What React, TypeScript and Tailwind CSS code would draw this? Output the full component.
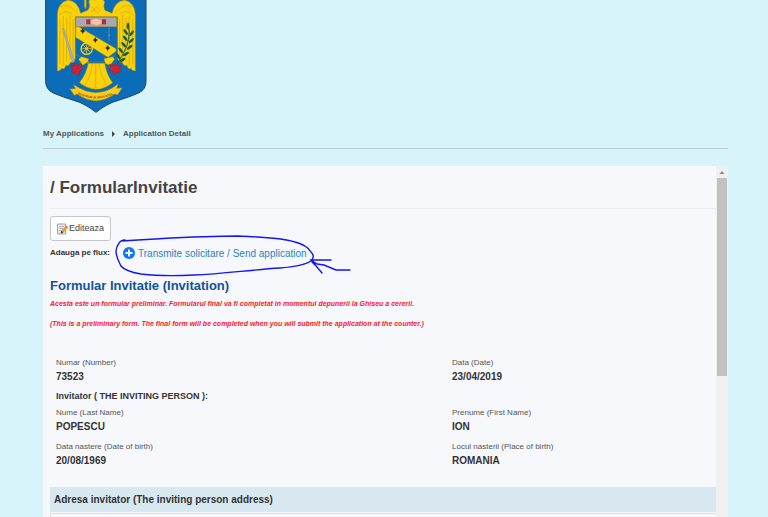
import type { ReactNode } from "react";

function Emblem() {
  return (
    <svg
      role="img"
      aria-label="Stema"
      viewBox="21 0 315 345"
      className="block h-[115px] w-[105px] shrink-0"
    >
      <path
        d="M29 -10H330V245Q330 268 308 279Q278 292 244 302Q214 310 180 337Q146 310 116 302Q82 292 52 279Q29 268 29 245Z"
        fill="#0b6cb8"
        stroke="#26445c"
        strokeWidth="3"
      />
      <g stroke="#a58a10" strokeWidth="1.5" strokeLinejoin="round">
        <path d="M145 -8H151V20L148 27L145 20Z" fill="#e9c412" />
        <path
          d="M64 42Q66 8 96 0Q126 4 134 40Q146 34 156 30Q164 18 158 4L168 -8H196L206 6Q200 22 208 32Q218 34 228 40Q236 4 266 0Q296 8 298 42V212Q290 216 284 204Q278 212 272 196Q264 200 258 186Q250 192 244 172V52H118V174Q112 190 104 186Q98 200 90 196Q84 212 78 204Q70 216 64 212Z"
          fill="#fbd10a"
        />
        <path d="M118 50H244V160L212 186H150L118 160Z" fill="#0b6cb8" />
        <path d="M119 80L128 80L240 146V154L216 172L119 112Z" fill="#fbd10a" />
        <path d="M119 52H242V80H119Z" fill="#a9a8ae" />
        <path
          d="M128 178L136 170L158 176L154 190L208 190L204 176L230 170L236 178L222 196L206 190Q212 226 230 248Q204 268 180 268Q152 266 130 248Q152 222 158 184L140 196Z"
          fill="#fbd10a"
        />
      </g>
      <g fill="none" stroke="#cba40a" strokeWidth="2">
        <path d="M70 45Q90 26 108 42M72 58V192M82 48V196M92 54V186M102 45V180M111 58V170M70 20Q96 8 124 38" />
        <path d="M292 45Q270 26 252 42M290 58V192M280 48V196M270 54V186M260 45V180M251 58V170M292 20Q266 8 238 38" />
        <path d="M169 192Q165 228 147 256M179 190V264M189 192Q195 230 212 256M166 20L174 28L182 20L190 28M164 36L174 30L184 38L194 30" />
      </g>
      <rect x="151" y="58" width="13" height="15" fill="#bd2536" />
      <rect x="197" y="58" width="13" height="15" fill="#bd2536" />
      <path
        d="M164 61L178 55L197 60V71L182 77L164 71Z"
        fill="#f4c2a4"
        stroke="#c98f7a"
        strokeWidth="1.5"
      />
      <g fill="#2c2b20">
        <path d="M140 84L143 90L148 93L143 96L140 102L137 96L132 93L137 90Z" />
        <path d="M178 111L181 117L186 120L181 123L178 129L175 123L170 120L175 117Z" />
        <path d="M215 135L218 141L223 144L218 147L215 153L212 147L207 144L212 141Z" />
      </g>
      <g fill="none" stroke="#f1cc24">
        <circle cx="152" cy="146" r="17" strokeWidth="4" />
        <circle cx="152" cy="146" r="4" fill="#f1cc24" />
        <path d="M152 129V163M135 146H169M140 134L164 158M164 134L140 158" strokeWidth="2" />
      </g>
      <path d="M219 84V122M215 106H223" fill="none" stroke="#8f9487" strokeWidth="2" />
      <path d="M78 84L84 86L116 184L109 188Z" fill="#a9adb1" stroke="#85898c" strokeWidth="1" />
      <path d="M277 72Q286 120 262 160L240 198" fill="none" stroke="#15573a" strokeWidth="3" />
      <g fill="#176044">
        <ellipse cx="276" cy="78" rx="4" ry="10" />
        <ellipse cx="269" cy="96" rx="4" ry="10" transform="rotate(-35 269 96)" />
        <ellipse cx="287" cy="100" rx="4" ry="10" transform="rotate(35 287 100)" />
        <ellipse cx="268" cy="115" rx="4" ry="10" transform="rotate(-40 268 115)" />
        <ellipse cx="286" cy="122" rx="4" ry="10" transform="rotate(45 286 122)" />
        <ellipse cx="263" cy="134" rx="4" ry="10" transform="rotate(-40 263 134)" />
        <ellipse cx="281" cy="142" rx="4" ry="10" transform="rotate(50 281 142)" />
        <ellipse cx="254" cy="151" rx="4" ry="10" transform="rotate(-35 254 151)" />
        <ellipse cx="270" cy="162" rx="4" ry="10" transform="rotate(60 270 162)" />
        <ellipse cx="246" cy="168" rx="4" ry="10" transform="rotate(-30 246 168)" />
        <ellipse cx="259" cy="180" rx="4" ry="10" transform="rotate(60 259 180)" />
      </g>
      <g fill="#cc2430" stroke="#8f2630" strokeWidth="1.5">
        <path d="M104 196L114 198L116 188L124 196L138 192L134 202L140 208L132 214L126 228L118 220L106 216L110 207Z" />
        <path d="M256 198L246 198L238 190L232 196L220 192L224 202L218 210L230 214L236 224L242 218L258 214L250 207Z" />
      </g>
      <path
        d="M113 254L130 264Q180 292 229 264L246 252L242 265L258 264L245 284L236 282Q180 322 123 282L115 286L102 267L118 266Z"
        fill="#f9cd17"
        stroke="#b08915"
        strokeWidth="1.5"
      />
      <path id="motto" d="M122 280Q180 312 242 278" fill="none" />
      <text
        fill="#9b3515"
        className="font-['Liberation_Sans',Arial,sans-serif] text-[9px] font-bold"
      >
        <textPath href="#motto" startOffset="4">
          NOSTRUM IN ANGUSTIIS
        </textPath>
      </text>
    </svg>
  );
}

function NoteIcon() {
  return (
    <svg viewBox="0 0 11 12" className="h-3 w-[11px]" aria-hidden="true">
      <path d="M0.5 1H8.5V11H0.5Z" fill="#e9ebee" stroke="#a3a3a3" />
      <path d="M2 3.5H7M2 5.5H6.5M2 7.5H4.5" stroke="#a9b4c2" />
      <path d="M8.7 3L10.8 5L6.5 9.5L4 10L4.5 7.5Z" fill="#f29a22" />
      <path d="M8.7 3L9.5 2.4L11 4.2L10.5 5Z" fill="#d0563d" />
      <path d="M3.6 10.4L4.4 7.8L6.3 9.7Z" fill="#333" />
    </svg>
  );
}

function PlusIcon() {
  return (
    <svg viewBox="0 0 12 12" className="h-3 w-3" aria-hidden="true">
      <circle cx="6" cy="6" r="6" fill="#0878f8" />
      <path d="M6 2.5V9.5M2.5 6H9.5" stroke="#fff" strokeWidth="2" />
    </svg>
  );
}

function InkMark() {
  return (
    <svg
      viewBox="0 0 250 55"
      className="pointer-events-none absolute -top-[13px] left-[60px] h-[55px] w-[250px]"
      fill="none"
      stroke="#1515f5"
      strokeWidth="1.4"
      strokeLinecap="round"
      aria-hidden="true"
    >
      <path d="M15 10C11 9 7 14 6 21C6 27 9 32 11 36C14 40 20 42 31 44C48 46 65 46 84 45C113 44 138 40 170 38C183 37 195 35 201 31C204 28 204 25 201 22C198 17 193 14 185 12C169 7 148 7 128 6C96 6 63 8 45 9L11 11" />
      <path d="M221 30H201L212 43M201 30L207 34L214 35L226 40L240 40M202 32L206 36" />
    </svg>
  );
}

function Field({ label, children }: { label: string; children: ReactNode }) {
  return (
    <div>
      <dt className="text-[8px] leading-[14px] text-[#555]">{label}</dt>
      <dd className="text-[10px] leading-[13px] font-bold text-[#333]">{children}</dd>
    </div>
  );
}

export default function App() {
  return (
    <div className="flex h-screen flex-col overflow-hidden bg-[#d7f4fb] pr-10 pl-[43px] font-['Liberation_Sans',Arial,sans-serif] text-[#333]">
      <Emblem />
      <nav
        aria-label="Breadcrumb"
        className="flex h-[34px] shrink-0 items-center gap-2 border-b border-[#c3c9d2] pt-1 text-[8px] font-bold text-[#555]"
      >
        <a href="#applications">My Applications</a>
        <svg viewBox="0 0 3 6" className="h-[6px] w-[3px]" aria-hidden="true">
          <path d="M0 0L3 3L0 6Z" fill="#444" />
        </svg>
        <span aria-current="page">Application Detail</span>
      </nav>

      <div className="mt-[17px] flex min-h-0 flex-1 bg-[#f6f8fb]">
        <main className="min-w-0 flex-1 overflow-hidden pl-[7px]">
          <h1 className="border-b border-[#eceef0] pt-[2px] text-[17px] leading-10 font-bold text-[#444]">
            / FormularInvitatie
          </h1>
          <button
            type="button"
            className="mt-[7px] flex h-[25px] items-center gap-px rounded-[3px] border border-[#c6c6c6] bg-white px-[6px] text-[9px] text-[#444]"
          >
            <NoteIcon />
            Editeaza
          </button>
          <div className="relative mt-[2px] flex h-5 items-center gap-[13px] whitespace-nowrap">
            <span className="text-[8px] font-bold">Adauga pe flux:</span>
            <a href="#send" className="flex items-center gap-[3px] text-[10px] text-[#2a83c1]">
              <PlusIcon />
              Transmite solicitare / Send application
            </a>
            <InkMark />
          </div>

          <h2 className="mt-[13px] text-[13px] leading-5 font-bold text-[#12539b]">
            Formular Invitatie (Invitation)
          </h2>
          <div className="space-y-1 text-[7px] leading-4 font-bold text-[#f8192b] italic">
            <p>Acesta este un formular preliminar. Formularul final va fi completat in momentul depunerii la Ghiseu a cererii.</p>
            <p>(This is a preliminary form. The final form will be completed when you will submit the application at the counter.)</p>
          </div>

          <div className="mt-6 pl-[6px]">
            <dl className="grid grid-cols-[60%_40%]">
              <Field label="Numar (Number)">73523</Field>
              <Field label="Data (Date)">23/04/2019</Field>
            </dl>
            <h3 className="mt-[6px] text-[9px] leading-[14px] font-bold">
              Invitator ( THE INVITING PERSON ):
            </h3>
            <dl className="mt-[3px] grid grid-cols-[60%_40%] gap-y-[7px]">
              <Field label="Nume (Last Name)">POPESCU</Field>
              <Field label="Prenume (First Name)">ION</Field>
              <Field label="Data nastere (Date of birth)">20/08/1969</Field>
              <Field label="Locul nasterii (Place of birth)">ROMANIA</Field>
            </dl>
          </div>

          <section className="mt-5">
            <h3 className="bg-[#d8e8f0] pl-1 text-[10px] leading-[25px] font-bold">
              Adresa invitator (The inviting person address)
            </h3>
            <div className="mt-px h-20 border-t border-l border-[#dedede]" />
          </section>
        </main>
        <div className="w-3 shrink-0 bg-[#f0f0f0]" aria-hidden="true">
          <svg viewBox="0 0 12 12" className="block h-3 w-3">
            <path d="M3.5 8L6 5L8.5 8Z" fill="#8b8b8b" />
          </svg>
          <div className="mx-px h-[198px] bg-[#c1c1c1]" />
        </div>
      </div>
    </div>
  );
}
